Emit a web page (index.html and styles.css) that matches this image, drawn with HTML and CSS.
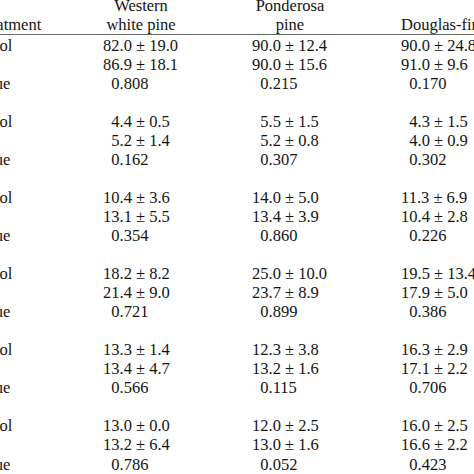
FILE: index.html
```html
<!DOCTYPE html>
<html lang="en">
<head>
<meta charset="utf-8">
<title>Table</title>
<link rel="stylesheet" href="styles.css">
</head>
<body>
<div class="sheet">
  <div class="grid head">
    <div class="th th-label"><span>Treatment</span></div>
    <div class="th"><span>Western</span><span>white pine</span></div>
    <div class="th"><span>Ponderosa</span><span>pine</span></div>
    <div class="th"><span class="empty">&nbsp;</span><span>Douglas-fir</span></div>
  </div>
  <div class="grid body">
    <div class="lab">Control</div><div class="val">82.0 ± 19.0</div><div class="val">90.0 ± 12.4</div><div class="val">90.0 ± 24.8</div>
    <div class="lab"></div><div class="val">86.9 ± 18.1</div><div class="val">90.0 ± 15.6</div><div class="val">91.0 ± 9.6</div>
    <div class="lab">P value</div><div class="val n1">0.808</div><div class="val n1">0.215</div><div class="val n1">0.170</div>
    <div class="gap"></div>

    <div class="lab">Control</div><div class="val n1">4.4 ± 0.5</div><div class="val n1">5.5 ± 1.5</div><div class="val n1">4.3 ± 1.5</div>
    <div class="lab"></div><div class="val n1">5.2 ± 1.4</div><div class="val n1">5.2 ± 0.8</div><div class="val n1">4.0 ± 0.9</div>
    <div class="lab">P value</div><div class="val n1">0.162</div><div class="val n1">0.307</div><div class="val n1">0.302</div>
    <div class="gap"></div>

    <div class="lab">Control</div><div class="val">10.4 ± 3.6</div><div class="val">14.0 ± 5.0</div><div class="val">11.3 ± 6.9</div>
    <div class="lab"></div><div class="val">13.1 ± 5.5</div><div class="val">13.4 ± 3.9</div><div class="val">10.4 ± 2.8</div>
    <div class="lab">P value</div><div class="val n1">0.354</div><div class="val n1">0.860</div><div class="val n1">0.226</div>
    <div class="gap"></div>

    <div class="lab">Control</div><div class="val">18.2 ± 8.2</div><div class="val">25.0 ± 10.0</div><div class="val">19.5 ± 13.4</div>
    <div class="lab"></div><div class="val">21.4 ± 9.0</div><div class="val">23.7 ± 8.9</div><div class="val">17.9 ± 5.0</div>
    <div class="lab">P value</div><div class="val n1">0.721</div><div class="val n1">0.899</div><div class="val n1">0.386</div>
    <div class="gap"></div>

    <div class="lab">Control</div><div class="val">13.3 ± 1.4</div><div class="val">12.3 ± 3.8</div><div class="val">16.3 ± 2.9</div>
    <div class="lab"></div><div class="val">13.4 ± 4.7</div><div class="val">13.2 ± 1.6</div><div class="val">17.1 ± 2.2</div>
    <div class="lab">P value</div><div class="val n1">0.566</div><div class="val n1">0.115</div><div class="val n1">0.706</div>
    <div class="gap"></div>

    <div class="lab">Control</div><div class="val">13.0 ± 0.0</div><div class="val">12.0 ± 2.5</div><div class="val">16.0 ± 2.5</div>
    <div class="lab"></div><div class="val">13.2 ± 6.4</div><div class="val">13.0 ± 1.6</div><div class="val">16.6 ± 2.2</div>
    <div class="lab">P value</div><div class="val n1">0.786</div><div class="val n1">0.052</div><div class="val n1">0.423</div>
  </div>
</div>
</body>
</html>
```

FILE: styles.css
```css
html, body {
  margin: 0;
  padding: 0;
  background: #ffffff;
  overflow: hidden;
}

.sheet {
  font-family: "Liberation Serif", "Times New Roman", serif;
  font-size: 16.5px;
  line-height: 19px;
  color: #141414;
  margin-top: -4px;
  margin-left: -38px;
  width: 520px;
}

.grid {
  display: grid;
  grid-template-columns: 68px 76px 76px 76px;
  column-gap: 73px;
}

.head {
  border-bottom: 1px solid #6a6a6a;
}

.th {
  display: flex;
  flex-direction: column;
  align-items: center;
  white-space: nowrap;
}

.th-label {
  align-items: flex-start;
  justify-content: flex-end;
  padding-left: 12px;
}

.body {
  padding-top: 0.5px;
}

.lab,
.val {
  height: 19.05px;
  line-height: 19.05px;
  white-space: nowrap;
}

.n1 {
  padding-left: 0.5em;
}

.gap {
  grid-column: 1 / -1;
  height: 19.05px;
}
```
